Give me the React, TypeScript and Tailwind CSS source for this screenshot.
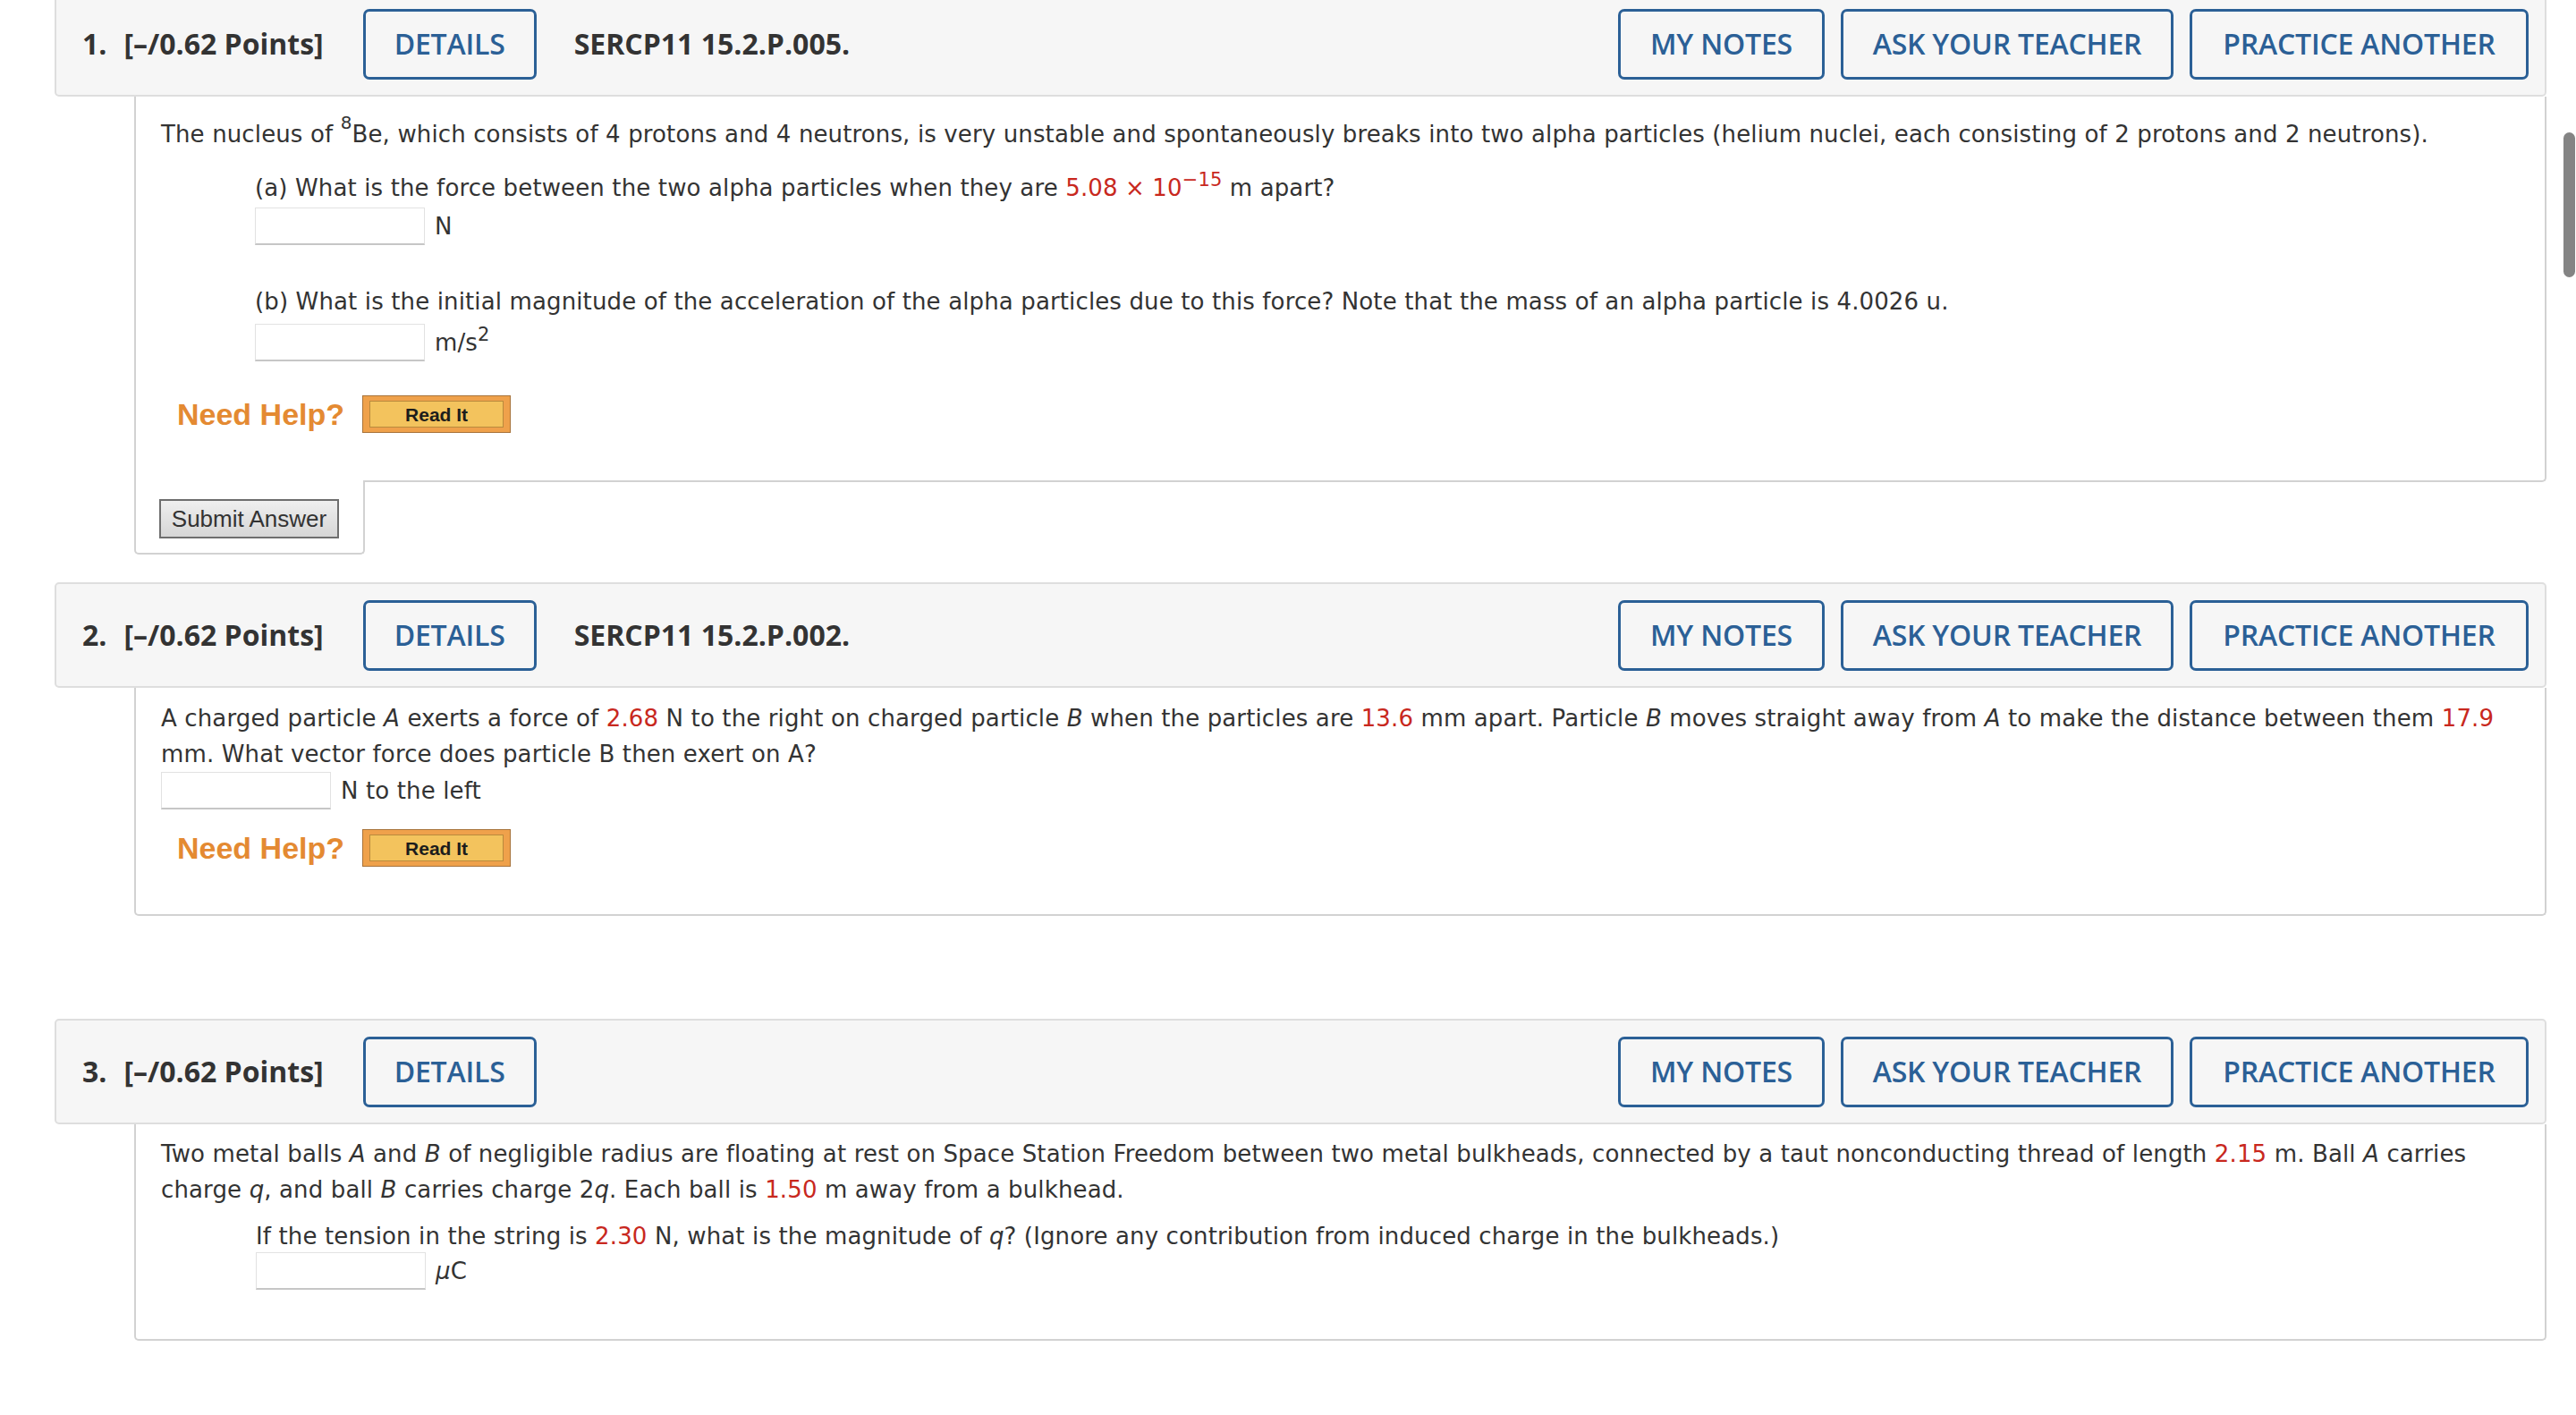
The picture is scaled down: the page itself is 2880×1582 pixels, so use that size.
import React from "react";

const R = ({ children }: { children: React.ReactNode }) => (
  <span className="text-[#c8281e]">{children}</span>
);

function HBtn({ children, w }: { children: React.ReactNode; w: string }) {
  return (
    <div
      className={`${w} h-[79px] flex items-center justify-center border-[3px] border-[#2b6096] rounded-[7px] text-[#2b6096] text-[32px] font-semibold tracking-[-0.2px]`}
    >
      {children}
    </div>
  );
}

function Header({ n, code, first }: { n: number; code?: string; first?: boolean }) {
  return (
    <div
      className={`flex items-center h-[118px] border-2 border-[#dedede] bg-[#f6f6f6] rounded-[5px] pl-[29px] pr-[18px] font-[Open_Sans,sans-serif] text-[#333] ${
        first ? "mt-[-10px]" : ""
      }`}
    >
      <span className="text-[32px] font-bold mr-[19px]">{n}.</span>
      <span className="text-[32px] font-bold">[–/0.62 Points]</span>
      <div className="ml-[44px]">
        <HBtn w="w-[194px]">DETAILS</HBtn>
      </div>
      {code && <span className="ml-[42px] text-[32px] font-bold">{code}</span>}
      <div className="ml-auto flex gap-[18px]">
        <HBtn w="w-[231px]">MY NOTES</HBtn>
        <HBtn w="w-[372px]">ASK YOUR TEACHER</HBtn>
        <HBtn w="w-[379px]">PRACTICE ANOTHER</HBtn>
      </div>
    </div>
  );
}

function Input() {
  return (
    <div className="w-[190px] h-[42px] border border-[#e2e2e2] border-b-2 border-b-[#c6c6c6] bg-white shrink-0" />
  );
}

function NeedHelp() {
  return (
    <div className="flex items-center ml-[18px] font-[Liberation_Sans,Arial,sans-serif] tracking-normal">
      <span className="font-bold text-[34px] text-[#e48a32] leading-none">Need Help?</span>
      <div className="ml-[20px] w-[166px] h-[42px] border border-[#a8733a] bg-[#efa14b] px-[7px] py-[5px]">
        <div className="h-full border-[1.5px] border-[#b98a3c] bg-[#f3c35d] flex items-center justify-center font-bold text-[21px] text-[#1c1c1c] leading-none">
          Read It
        </div>
      </div>
    </div>
  );
}

export default function App() {
  return (
    <div className="relative min-h-[1582px] bg-white overflow-hidden">
      <div className="pl-[61px] pr-[33px]">
        {/* Question 1 */}
        <Header n={1} code="SERCP11 15.2.P.005." first />
        <div className="ml-[89px] border-x-2 border-b-2 border-[#d2d2d2] rounded-br-[5px] pl-[28px] pr-[28px] pt-[22px] pb-[53px] font-[DejaVu_Sans,Verdana,sans-serif] text-[26px] leading-[40px] tracking-[0.13px] text-[#333]">
          <p>
            The nucleus of{" "}
            <span className="relative top-[-15px] text-[20px] leading-none">8</span>Be, which consists of 4 protons and 4
            neutrons, is very unstable and spontaneously breaks into two alpha particles (helium nuclei, each consisting of 2
            protons and 2 neutrons).
          </p>
          <div className="ml-[105px] mt-[20px]">
            <p>
              (a) What is the force between the two alpha particles when they are{" "}
              <R>
                5.08 × 10<span className="relative top-[-11px] text-[21px] leading-none">−15</span>
              </R>{" "}
              m apart?
            </p>
            <div className="flex items-center gap-[11px] mt-[2px]">
              <Input />
              <span>N</span>
            </div>
            <p className="mt-[43px]">
              (b) What is the initial magnitude of the acceleration of the alpha particles due to this force? Note that the
              mass of an alpha particle is 4.0026 u.
            </p>
            <div className="flex items-center gap-[11px] mt-[5px]">
              <Input />
              <span>
                m/s<span className="relative top-[-11px] text-[21px] leading-none">2</span>
              </span>
            </div>
          </div>
          <div className="mt-[38px]">
            <NeedHelp />
          </div>
        </div>
        <div className="relative ml-[89px] mt-[-2px] w-[258px] h-[83px] bg-white border-x-2 border-b-2 border-[#d2d2d2] rounded-b-[5px] pl-[26px] pt-[21px]">
          <div className="w-[201px] h-[44px] border-2 border-[#6e6e6e] bg-gradient-to-b from-[#efefef] to-[#d6d6d6] flex items-center justify-center font-[Liberation_Sans,Arial,sans-serif] text-[26px] text-[#333] leading-none">
            Submit Answer
          </div>
        </div>

        {/* Question 2 */}
        <div className="mt-[31px]">
          <Header n={2} code="SERCP11 15.2.P.002." />
        </div>
        <div className="ml-[89px] border-x-2 border-b-2 border-[#d2d2d2] rounded-b-[5px] pl-[28px] pr-[28px] pt-[14px] pb-[53px] font-[DejaVu_Sans,Verdana,sans-serif] text-[26px] leading-[40px] tracking-[0.13px] text-[#333]">
          <p>
            A charged particle <i>A</i> exerts a force of <R>2.68</R> N to the right on charged particle <i>B</i> when the
            particles are <R>13.6</R> mm apart. Particle <i>B</i> moves straight away from <i>A</i> to make the distance
            between them <R>17.9</R> mm. What vector force does particle B then exert on A?
          </p>
          <div className="flex items-center gap-[11px] mt-[0px]">
            <Input />
            <span>N to the left</span>
          </div>
          <div className="mt-[22px]">
            <NeedHelp />
          </div>
        </div>

        {/* Question 3 */}
        <div className="mt-[115px]">
          <Header n={3} />
        </div>
        <div className="ml-[89px] border-x-2 border-b-2 border-[#d2d2d2] rounded-b-[5px] pl-[28px] pr-[28px] pt-[13px] pb-[55px] font-[DejaVu_Sans,Verdana,sans-serif] text-[26px] leading-[40px] tracking-[0.13px] text-[#333]">
          <p>
            Two metal balls <i>A</i> and <i>B</i> of negligible radius are floating at rest on Space Station Freedom between
            two metal bulkheads, connected by a taut nonconducting thread of length <R>2.15</R> m. Ball <i>A</i> carries
            charge <i>q</i>, and ball <i>B</i> carries charge 2<i>q</i>. Each ball is <R>1.50</R> m away from a bulkhead.
          </p>
          <div className="ml-[106px] mt-[12px]">
            <p>
              If the tension in the string is <R>2.30</R> N, what is the magnitude of <i>q</i>? (Ignore any contribution
              from induced charge in the bulkheads.)
            </p>
            <div className="flex items-center gap-[11px] mt-[-2px]">
              <Input />
              <span>
                <i>μ</i>C
              </span>
            </div>
          </div>
        </div>
      </div>

      {/* overlay scrollbar */}
      <div className="absolute right-[1px] top-[148px] w-[13px] h-[162px] rounded-full bg-[#848484]" />
    </div>
  );
}
